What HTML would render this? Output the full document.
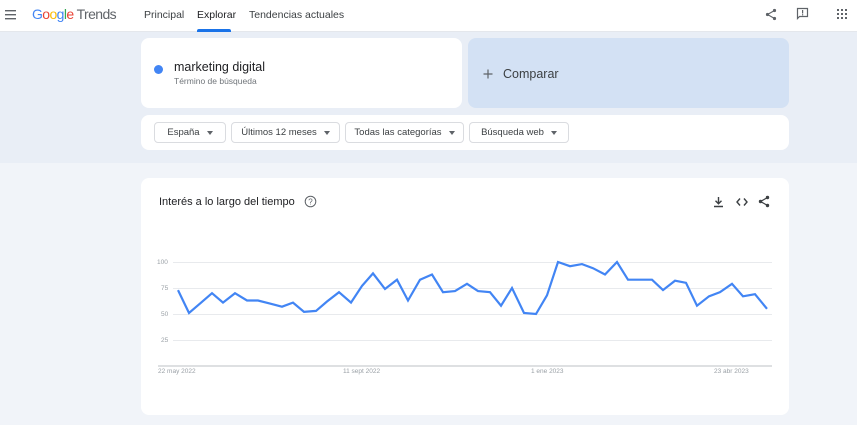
<!DOCTYPE html>
<html><head><meta charset="utf-8"><style>
*{margin:0;padding:0;box-sizing:border-box}
body{width:857px;height:425px;overflow:hidden;font-family:"Liberation Sans",Arial,sans-serif;background:#f1f4f9;position:relative;color:#202124}
.hdr{position:absolute;left:0;top:0;width:857px;height:32px;background:#fff;border-bottom:1px solid #e4e7ec}
.upper{position:absolute;left:0;top:32px;width:857px;height:131px;background:#e9eef6}
.abs{position:absolute}
.card{position:absolute;background:#fff;border-radius:8px}
.nav{position:absolute;top:9px;font-size:10.5px;color:#3c4043}
.chip{position:absolute;top:122px;height:21px;border:1px solid #dadce0;border-radius:4px;font-size:9.5px;color:#3c4043;display:flex;align-items:center;justify-content:center;gap:7px}
.tri{width:0;height:0;border-left:3px solid transparent;border-right:3px solid transparent;border-top:4px solid #5f6368}
.ax{position:absolute;font-size:6.5px;color:#9aa0a6}
</style></head><body>
<div class="hdr">
  <svg class="abs" style="left:5px;top:10px" width="12" height="10"><rect y="0" width="11" height="1.4" fill="#5f6368"/><rect y="4" width="11" height="1.4" fill="#5f6368"/><rect y="8" width="11" height="1.4" fill="#5f6368"/></svg>
  <div class="abs" style="left:32px;top:6px;font-size:14px;letter-spacing:-0.6px"><span style="color:#4285f4">G</span><span style="color:#ea4335">o</span><span style="color:#fbbc05">o</span><span style="color:#4285f4">g</span><span style="color:#34a853">l</span><span style="color:#ea4335">e</span> <span style="color:#5f6368">Trends</span></div>
  <div class="nav" style="left:144px">Principal</div>
  <div class="nav" style="left:197px;color:#202124">Explorar</div>
  <div class="abs" style="left:197px;top:29px;width:34px;height:3px;background:#1a73e8;border-radius:2px 2px 0 0"></div>
  <div class="nav" style="left:249px">Tendencias actuales</div>
  <svg class="abs" style="left:765px;top:8px" width="12" height="13" viewBox="0 0 12 13"><circle cx="9.5" cy="2.5" r="1.6" fill="#5f6368"/><circle cx="2.5" cy="6.5" r="1.6" fill="#5f6368"/><circle cx="9.5" cy="10.5" r="1.6" fill="#5f6368"/><path d="M9.5 2.5L2.5 6.5L9.5 10.5" stroke="#5f6368" stroke-width="1.1" fill="none"/></svg>
  <svg class="abs" style="left:796px;top:7px" width="13" height="13" viewBox="0 0 13 13"><path d="M1.5 1.5h10v8h-8l-2 2z" stroke="#5f6368" stroke-width="1.2" fill="none"/><rect x="6" y="3" width="1.2" height="3.5" fill="#5f6368"/><rect x="6" y="7.2" width="1.2" height="1.2" fill="#5f6368"/></svg>
  <svg class="abs" style="left:837px;top:9px" width="10" height="10"><g fill="#5f6368"><rect x="0" y="0" width="2" height="2"/><rect x="4" y="0" width="2" height="2"/><rect x="8" y="0" width="2" height="2"/><rect x="0" y="4" width="2" height="2"/><rect x="4" y="4" width="2" height="2"/><rect x="8" y="4" width="2" height="2"/><rect x="0" y="8" width="2" height="2"/><rect x="4" y="8" width="2" height="2"/><rect x="8" y="8" width="2" height="2"/></g></svg>
</div>
<div class="upper"></div>
<div class="card" style="left:141px;top:38px;width:321px;height:70px">
  <div class="abs" style="left:13px;top:27px;width:9px;height:9px;border-radius:50%;background:#4285f4"></div>
  <div class="abs" style="left:33px;top:22px;font-size:12.5px;color:#202124">marketing digital</div>
  <div class="abs" style="left:33px;top:38px;font-size:8.5px;color:#70757a">Término de búsqueda</div>
</div>
<div class="card" style="left:468px;top:38px;width:321px;height:70px;background:#d3e1f4">
  <svg class="abs" style="left:15px;top:31px" width="10" height="10"><path d="M5 0.5v9M0.5 5h9" stroke="#5f6368" stroke-width="1.2"/></svg>
  <div class="abs" style="left:35px;top:29px;font-size:12.5px;color:#3c4043">Comparar</div>
</div>
<div class="card" style="left:141px;top:115px;width:648px;height:35px"></div>
<div class="chip" style="left:154px;width:72px">España<span class="tri"></span></div>
<div class="chip" style="left:231px;width:109px">Últimos 12 meses<span class="tri"></span></div>
<div class="chip" style="left:345px;width:119px">Todas las categorías<span class="tri"></span></div>
<div class="chip" style="left:469px;width:100px">Búsqueda web<span class="tri"></span></div>

<div class="card" style="left:141px;top:178px;width:648px;height:237px">
  <div class="abs" style="left:18px;top:18px;font-size:11px;color:#202124">Interés a lo largo del tiempo</div>
  <svg class="abs" style="left:163px;top:17px" width="13" height="13" viewBox="0 0 13 13"><circle cx="6.5" cy="6.5" r="5.3" stroke="#5f6368" stroke-width="1" fill="none"/><text x="6.5" y="9.3" font-size="8" text-anchor="middle" fill="#5f6368" font-family="Liberation Sans">?</text></svg>
  <svg class="abs" style="left:572px;top:18px" width="11" height="12" viewBox="0 0 11 12"><path d="M5.5 1v6.5M2.5 4.8l3 3 3-3M1 10.5h9" stroke="#3c4043" stroke-width="1.4" fill="none"/></svg>
  <svg class="abs" style="left:595px;top:19px" width="12" height="10" viewBox="0 0 12 10"><path d="M4 1.5L1 5l3 3.5M8 1.5L11 5l-3 3.5" stroke="#3c4043" stroke-width="1.4" fill="none"/></svg>
  <svg class="abs" style="left:617px;top:17px" width="12" height="13" viewBox="0 0 12 13"><circle cx="9.5" cy="2.5" r="1.7" fill="#3c4043"/><circle cx="2.5" cy="6.5" r="1.7" fill="#3c4043"/><circle cx="9.5" cy="10.5" r="1.7" fill="#3c4043"/><path d="M9.5 2.5L2.5 6.5L9.5 10.5" stroke="#3c4043" stroke-width="1.2" fill="none"/></svg>
</div>
<svg class="abs" style="left:0;top:0" width="857" height="425">
  <g stroke="#e8eaed" stroke-width="1">
    <line x1="173" y1="262.5" x2="772" y2="262.5"/>
    <line x1="173" y1="288.5" x2="772" y2="288.5"/>
    <line x1="173" y1="314.5" x2="772" y2="314.5"/>
    <line x1="173" y1="340.5" x2="772" y2="340.5"/>
  </g>
  <line x1="158" y1="366" x2="772" y2="366" stroke="#bdc1c6" stroke-width="1"/>
  <polyline fill="none" stroke="#4285f4" stroke-width="2.2" stroke-linejoin="miter" points="178,290.1 189,313 200,303.6 212,293.2 223,302.6 235,293.2 247,300.5 258,300.5 270,303.6 282,306.7 293,302.6 304,311.9 316,310.9 327,301.5 339,292.2 351,302.6 362,285.9 373,273.4 385,289 397,279.7 408,300.5 420,279.7 432,274.5 443,292.2 455,291.1 467,283.8 478,291.1 490,292.2 501,305.7 512,288 524,313 536,314 547,295.3 558,262 570,266.2 582,264.1 593,268.2 605,274.5 617,262 628,279.7 640,279.7 652,279.7 663,290.1 675,280.7 686,282.8 697,305.7 709,296.3 720,292.2 732,283.8 743,296.3 755,294.2 767,308.8"/>
</svg>
<div class="ax" style="left:157px;top:259px">100</div>
<div class="ax" style="left:161px;top:285px">75</div>
<div class="ax" style="left:161px;top:311px">50</div>
<div class="ax" style="left:161px;top:337px">25</div>
<div class="ax" style="left:158px;top:368px">22 may 2022</div>
<div class="ax" style="left:343px;top:368px">11 sept 2022</div>
<div class="ax" style="left:531px;top:368px">1 ene 2023</div>
<div class="ax" style="left:714px;top:368px">23 abr 2023</div>
</body></html>
